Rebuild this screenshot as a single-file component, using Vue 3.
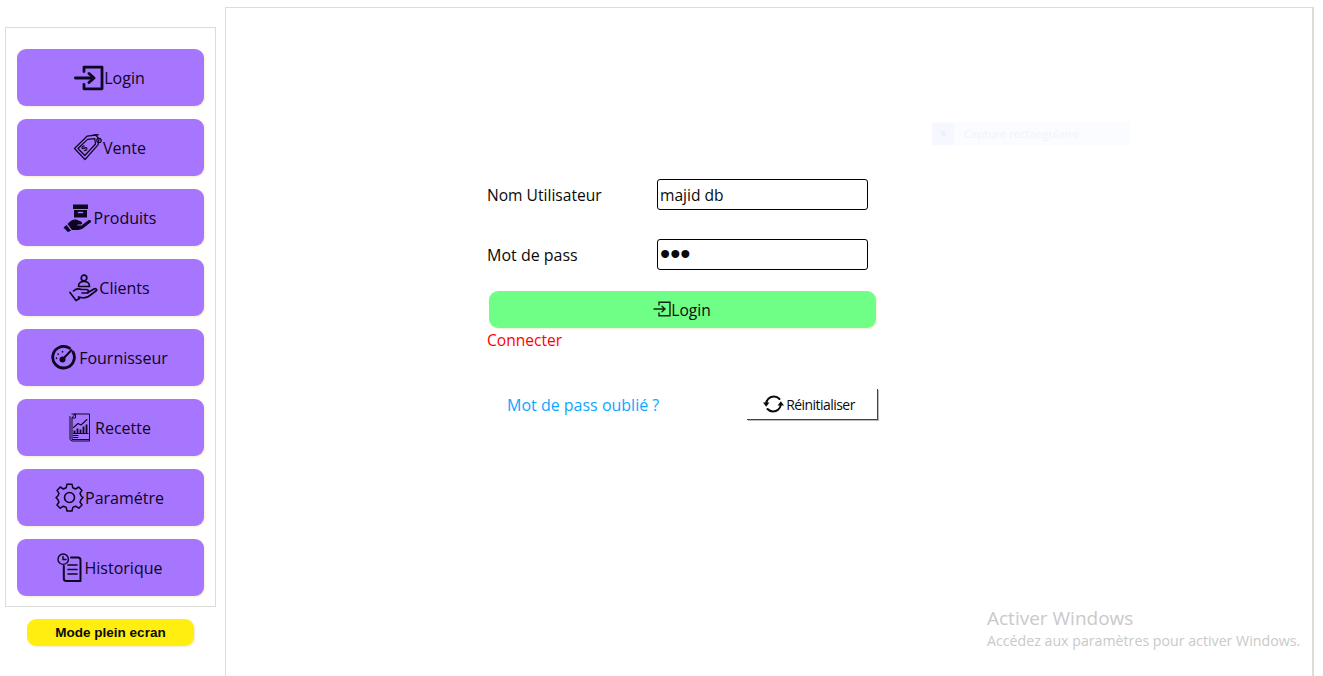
<script setup>
const items = [
  { label: 'Login', icon: 'login', w: 30, h: 26, gap: 0 },
  { label: 'Vente', icon: 'tag', w: 30, h: 28, gap: 0 },
  { label: 'Produits', icon: 'box', w: 29, h: 28, gap: 2 },
  { label: 'Clients', icon: 'client', w: 29, h: 28, gap: 1 },
  { label: 'Fournisseur', icon: 'gauge', w: 25, h: 25, gap: 3 },
  { label: 'Recette', icon: 'report', w: 23, h: 29, gap: 4 },
  { label: 'Paramétre', icon: 'gear', w: 29, h: 29, gap: 1 },
  { label: 'Historique', icon: 'history', w: 25, h: 29, gap: 3 },
]
</script>

<template>
  <div class="page">
    <aside class="side">
      <nav class="menu">
        <button v-for="it in items" :key="it.label" class="menu-btn" type="button">
          <svg class="ico" :style="{ width: it.w + 'px', height: it.h + 'px', marginRight: it.gap + 'px' }" :viewBox="`0 0 ${it.w} ${it.h}`" fill="none" stroke="#0d0420" stroke-linecap="round" stroke-linejoin="round">
            <g v-if="it.icon === 'login'" stroke-width="2.8">
              <path d="M10 6.5V2.2H28V23.8H10V19.5" />
              <path d="M1.4 13H19" />
              <path d="M15 8.5L20 13L15 17.5" stroke-width="3" />
            </g>
            <g v-else-if="it.icon === 'tag'" stroke-width="1.2">
              <path d="M1.5 14.5L14 2.2L22.8 1.2L26 5L25 10.8L12 25.5Z" />
              <path d="M5 14.5L14.5 5.4L21.8 4.6L22.5 10L11.8 21.5Z" />
              <text x="0" y="0" transform="translate(13.5 16.5) rotate(-45)" font-size="9" font-family="Liberation Sans, sans-serif" font-weight="700" fill="#0d0420" stroke="none" text-anchor="middle">$</text>
              <circle cx="26" cy="6.5" r="2.2" />
              <path d="M20 1.2L25 0.8" stroke-width="1.6" />
            </g>
            <g v-else-if="it.icon === 'box'">
              <path d="M10 0.5H25V5H10Z M11 6H24V13.5H11Z" fill="#0d0420" stroke="none" />
              <path d="M15.5 8.5H19.5" stroke="#a776ff" stroke-width="1.6" />
              <path d="M4.5 20C7 17 10 15 13 15.5L18 17.5C19.5 18 19.5 20.5 18 20.5H14.5V21.5H18.5L25 16.5C26.5 15.5 28.8 16.5 28 18L20.5 24C18.5 25.5 16 26 14 26H9Z" fill="#0d0420" stroke="none" />
              <path d="M0.5 23.5L3.5 21L8 26.8L4.8 28Z" fill="#0d0420" stroke="none" />
            </g>
            <g v-else-if="it.icon === 'client'" stroke-width="1.7">
              <circle cx="15" cy="4" r="2.8" />
              <path d="M9.5 12.5C9.5 9 12 7.5 15 7.5C18 7.5 20.5 9 20.5 12.5Z" />
              <path d="M1 18.5L7 26.5L10.5 24.5L9.5 23C13 24 17 24 19.5 22.5L27.5 16.5C28 15 26.5 14.2 25 15L19 18.5" />
              <path d="M4.5 17C7 14.5 10 14.5 12.5 15.5H17.5C20 15.5 20 19 17.5 19H13" />
            </g>
            <g v-else-if="it.icon === 'gauge'">
              <path d="M18.5 3.2A10.8 10.8 0 1 0 22 7" stroke-width="2.8" />
              <path d="M11 15L20.5 5" stroke-width="2" />
              <circle cx="11.5" cy="14.5" r="3" fill="#0d0420" stroke="none" />
              <path d="M5.5 13.5V13M7 9L7.3 9.3M11.5 6.5V7M15.5 7.5" stroke-width="1.5" />
            </g>
            <g v-else-if="it.icon === 'report'" stroke-width="1">
              <path d="M2 3.5V26.5L4 28H21.5V27" />
              <path d="M4 1H21.5V26.5H4V5L7 1" />
              <path d="M4 5H7.5V1.5" />
              <path d="M5.5 14.5L10 10.5L13 12L19 6.5" stroke-width="1.1" />
              <path d="M6.5 20V17.5M9.5 20V15.5M12.5 20V16.5M15.5 20V13.5M18.5 20V11.5" stroke-width="1.8" stroke-linecap="butt" />
              <path d="M5.5 20.5H20M5.5 22.5H10M5.5 24.5H10" />
            </g>
            <g v-else-if="it.icon === 'gear'" stroke-width="1.5">
              <path d="M12 1.2H17L17.8 4.8L20.6 6L23.8 4L27 7.4L25 10.4L26.2 13L28 14.5L26.2 16.4L25 19L27 22L23.8 25.2L20.6 23.2L17.8 24.4L17 28H12L11.2 24.4L8.4 23.2L5.2 25.2L2 22L4 19L2.8 16.4L1 14.5L2.8 13L4 10.4L2 7.4L5.2 4L8.4 6L11.2 4.8Z" />
              <circle cx="14.5" cy="14.5" r="5" stroke-width="1.6" />
            </g>
            <g v-else stroke-width="1.6">
              <path d="M14 4.5H21C23 4.5 23.5 5.5 23.5 7V28H9.5C7.5 28 6.8 27 6.8 25.5V13" stroke-width="2" />
              <circle cx="6.2" cy="6.2" r="5.2" stroke-width="1.4" />
              <path d="M6 3.5V6.5H9" stroke-width="1.4" />
              <path d="M11 12H20M11 16.5H20M11 21H20" stroke-width="1.6" />
            </g>
          </svg>
          <span>{{ it.label }}</span>
        </button>
      </nav>
      <button class="full" type="button">Mode plein ecran</button>
    </aside>

    <main class="main">
      <form class="form" @submit.prevent>
        <label class="row">
          <span class="lab">Nom Utilisateur</span>
          <input class="inp" type="text" value="majid db" />
        </label>
        <label class="row row2">
          <span class="lab lab2">Mot de pass</span>
          <input class="inp pw" type="password" value="abc" />
        </label>
        <button class="go" type="button">
          <svg class="go-ico" viewBox="0 0 18 16" fill="none" stroke="#10241a" stroke-width="1.4" stroke-linecap="round">
            <path d="M6 4V1.2H17V14.8H6V12" />
            <path d="M1 8H12M9 5.2L12 8L9 10.8" />
          </svg>
          <span>Login</span>
        </button>
        <div class="status">Connecter</div>
        <div class="bottom">
          <a class="forgot">Mot de pass oublié ?</a>
          <button class="reset" type="button">
            <svg class="re-ico" viewBox="0 0 21 18" fill="none" stroke="#0a0a0a" stroke-width="2" stroke-linecap="round">
              <path d="M3.2 9C3.2 4.5 7 1.5 11 1.5C13.2 1.5 15 2.3 16.5 4" />
              <path d="M17.8 9C17.8 13.5 14 16.5 10 16.5C7.8 16.5 6 15.7 4.5 14" />
              <path d="M0 7.5H6.4L3.2 11.8Z" fill="#0a0a0a" stroke="none" />
              <path d="M14.6 10.5H21L17.8 6.2Z" fill="#0a0a0a" stroke="none" />
            </svg>
            <span>Réinitialiser</span>
          </button>
        </div>
      </form>

      <div class="snip">
        <span class="snip-ico"><i></i></span>
        <span class="snip-txt">Capture rectangulaire</span>
      </div>
      <div class="wm">
        <div class="wm1">Activer Windows</div>
        <div class="wm2">Accédez aux paramètres pour activer Windows.</div>
      </div>
    </main>
  </div>
</template>

<style>
html, body { margin: 0; background: #fff; overflow: hidden; }
</style>

<style scoped>
.page {
  display: flex;
  align-items: flex-start;
  width: 1323px;
  height: 676px;
  overflow: hidden;
  font-family: "Open Sans", "Noto Sans", sans-serif;
  color: #0d0420;
  box-sizing: border-box;
  padding: 7px 9px 0 5px;
}
button { font-family: inherit; color: inherit; cursor: pointer; }
.side {
  width: 211px;
  flex: none;
  margin-top: 20px;
  margin-right: 9px;
  display: flex;
  flex-direction: column;
  align-items: center;
}
.menu {
  width: 100%;
  box-sizing: border-box;
  border: 1px solid #dcdcdc;
  padding: 21px 11px 10px;
  display: flex;
  flex-direction: column;
  gap: 13px;
}
.menu-btn {
  height: 57px;
  width: 187px;
  border: 0;
  border-radius: 9px;
  background: #a776ff;
  box-shadow: 1px 1px 2px #f3eccf;
  display: flex;
  align-items: center;
  justify-content: center;
  font-size: 16px;
  padding: 0 2px 0 0;
}
.ico { flex: none; display: block; }
.full {
  margin-top: 12px;
  width: 167px;
  height: 27px;
  border: 0;
  border-radius: 9px;
  background: #ffee10;
  box-shadow: 1px 1px 2px #f3eccf;
  font-family: "Liberation Sans", sans-serif;
  font-weight: 700;
  font-size: 13.5px;
  color: #0a0a0a;
  padding: 0;
}
.main {
  position: relative;
  flex: 1;
  height: 720px;
  box-sizing: border-box;
  border: 1px solid #dcdcdc;
  border-right-width: 2px;
  padding: 171px 0 0 261px;
}
.form { width: 391px; color: #0a0a0a; font-size: 15.6px; }
.row { display: flex; align-items: center; height: 31px; }
.row2 { margin-top: 29px; }
.lab { width: 170px; flex: none; }
.lab2 { font-size: 16px; }
.inp {
  width: 211px;
  height: 31px;
  box-sizing: border-box;
  border: 1px solid #000;
  border-radius: 3px;
  padding: 0 2px;
  font: inherit;
  color: #0a0a0a;
  outline: none;
  background: #fff;
}
.pw { font-family: "Liberation Sans", sans-serif; font-size: 29px; padding: 0 2px; }
.go {
  margin: 21px 0 0 2px;
  width: 387px;
  height: 37px;
  border: 0;
  border-radius: 9px;
  background: #70ff86;
  box-shadow: 1px 1px 2px #f3eccf;
  display: flex;
  align-items: center;
  justify-content: center;
  font-size: 15.6px;
  padding: 0 1px 0 0;
}
.go-ico { width: 18px; height: 16px; flex: none; margin-top: -2px; }
.status { color: #ff0000; line-height: 24px; margin-top: 0; }
.bottom {
  display: flex;
  align-items: center;
  justify-content: space-between;
  margin-top: 37px;
  padding-left: 20px;
  height: 31px;
}
.forgot { color: #0ca6ff; font-size: 16px; }
.reset {
  width: 131px;
  height: 31px;
  box-sizing: border-box;
  background: #fff;
  border: 0;
  border-right: 1px solid #444;
  border-bottom: 1px solid #444;
  box-shadow: 1px 1px 0 #bbb;
  display: flex;
  align-items: center;
  justify-content: center;
  font-size: 14px;
  letter-spacing: -0.55px;
  padding: 0 6px 0 0;
}
.re-ico { width: 21px; height: 18px; flex: none; margin-right: 2px; }
.snip {
  position: absolute;
  left: 706px;
  top: 114px;
  width: 198px;
  height: 23px;
  background: #fbfcff;
  display: flex;
  align-items: center;
}
.snip-ico {
  width: 22px;
  height: 22px;
  background: #f5f9ff;
  display: flex;
  align-items: center;
  justify-content: center;
}
.snip-ico i { width: 5px; height: 5px; border-radius: 50%; background: #eef0f6; }
.snip-txt { margin-left: 10px; font-size: 11.3px; color: #f1f3f8; white-space: nowrap; }
.wm { position: absolute; left: 761px; top: 598px; color: #c9c9c9; white-space: nowrap; }
.wm1 { font-size: 19px; line-height: 25px; }
.wm2 { font-size: 14.2px; line-height: 20px; }
</style>
